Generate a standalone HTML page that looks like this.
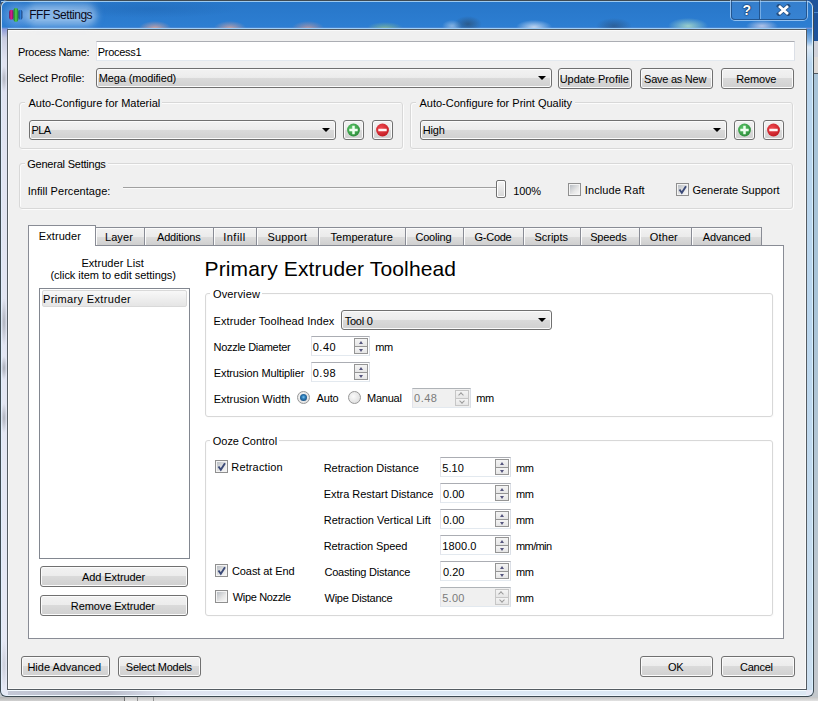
<!DOCTYPE html><html><head><meta charset="utf-8"><style>
html,body{margin:0;padding:0;width:818px;height:701px;overflow:hidden}
body{position:relative;font-family:"Liberation Sans",sans-serif}
body>div,body>svg{position:absolute}
.t{white-space:nowrap;line-height:0;font-family:"Liberation Sans",sans-serif}
</style></head><body>
<div style="left:0px;top:0px;width:818px;height:701px;background:linear-gradient(#a9c4d8 0px,#a9c4d8 300px,#bcc6ce 600px,#c4c8cc 100%)"></div>
<div style="left:814px;top:0px;width:4px;height:41px;background:#1d529a"></div>
<div style="left:814px;top:12px;width:4px;height:1px;background:#4a86c8"></div>
<div style="left:814px;top:41px;width:4px;height:16px;background:#d0d2da"></div>
<div style="left:814px;top:57px;width:4px;height:16px;background:#dcd8d4"></div>
<div style="left:814px;top:73px;width:4px;height:1px;background:#505860"></div>
<div style="left:0px;top:0px;width:10px;height:10px;background:#1d4f8c"></div>
<div style="left:0px;top:697px;width:818px;height:4px;background:linear-gradient(#c4c4c4,#e2e2e2)"></div>
<div style="left:0px;top:697px;width:124px;height:4px;background:linear-gradient(#b4b4b4,#d0d0d0)"></div>
<div style="left:124px;top:697px;width:1px;height:4px;background:#707070"></div>
<div style="left:137px;top:697px;width:1px;height:4px;background:#909090"></div>
<div style="left:153px;top:697px;width:1px;height:4px;background:#909090"></div>
<div style="left:0px;top:0px;width:814px;height:697px;background:linear-gradient(#2776c8 0px,#2d7ed2 27px,#8c9ad8 29px,#c8cce0 38px,#e0e3f0 60px,#e6e9f5 100%);border-radius:7px 7px 6px 6px;box-shadow:inset 0 0 0 1px #3e4a52, inset 0 0 0 2px rgba(225,240,255,0.85)"></div>
<div style="left:1px;top:66px;width:6px;height:26px;background:radial-gradient(closest-side,rgba(120,125,135,0.45),rgba(120,125,135,0))"></div>
<div style="left:1px;top:298px;width:6px;height:48px;background:radial-gradient(closest-side,rgba(120,125,135,0.5),rgba(120,125,135,0))"></div>
<div style="left:1px;top:356px;width:6px;height:24px;background:radial-gradient(closest-side,rgba(120,125,135,0.55),rgba(120,125,135,0))"></div>
<div style="left:1px;top:403px;width:6px;height:30px;background:radial-gradient(closest-side,rgba(120,125,135,0.5),rgba(120,125,135,0))"></div>
<div style="left:1px;top:640px;width:6px;height:50px;background:radial-gradient(closest-side,rgba(120,125,135,0.25),rgba(120,125,135,0))"></div>
<div style="left:807px;top:29px;width:6px;height:661px;background:linear-gradient(#3f86d2 0px,#8ab8e6 12px,#dce8f4 18px,#bad6ee 34px,#bad6ee 45%,#cde0f0 100%);box-shadow:inset -1px 0 0 #d8f0ff"></div>
<div style="left:8px;top:690px;width:798px;height:6px;background:linear-gradient(90deg,#c4c8d6 0px,#b8bcca 100px,#dfe3f0 160px,#dce8f4 360px,#dce8f4 100%);box-shadow:inset 0 1px 0 #f4fbff, inset 0 -1px 0 #f0f8ff"></div>
<div style="left:1px;top:1px;width:812px;height:1px;background:#9ccaf0"></div>
<div style="left:8px;top:28px;width:798px;height:1px;background:#a0d0f8"></div>
<div style="left:7px;top:29px;width:800px;height:661px;background:#f0f0f0;box-shadow:inset 0 0 0 1px #555c62, inset 0 0 0 2px #fafafa"></div>
<div style="left:0px;top:0px;width:34px;height:30px;background:radial-gradient(closest-side,rgba(170,200,245,0.55),rgba(0,0,0,0))"></div>
<svg style="left:8px;top:6px" width="16" height="18" viewBox="0 0 16 18"><defs><linearGradient id="gm" x1="0" x2="1"><stop offset="0" stop-color="#6a1040"/><stop offset="0.45" stop-color="#e0209a"/><stop offset="1" stop-color="#7a1050"/></linearGradient><linearGradient id="gg" x1="0" x2="1"><stop offset="0" stop-color="#1a6a20"/><stop offset="0.5" stop-color="#50d050"/><stop offset="1" stop-color="#1a7a2a"/></linearGradient><linearGradient id="gb" x1="0" x2="1"><stop offset="0" stop-color="#10306a"/><stop offset="0.5" stop-color="#2a80e0"/><stop offset="1" stop-color="#0a2a60"/></linearGradient></defs><rect x="1.2" y="3.8" width="4.2" height="10" rx="2.1" fill="url(#gm)"/><rect x="10.4" y="3.8" width="4" height="10" rx="2" fill="url(#gb)"/><rect x="5.5" y="2" width="4.8" height="14" rx="2.4" fill="url(#gg)"/></svg>
<div style="left:30px;top:9px;width:62px;height:12px;background:rgba(210,230,252,0.55);border-radius:6px;box-shadow:0 0 7px 5px rgba(210,230,252,0.55)"></div>
<div class="t" id="t0" style="left:29.20px;top:15px;font-size:12px;color:#0a0a1a;letter-spacing:-0.482px;">FFF Settings</div>
<div style="left:1px;top:1px;width:812px;height:27px;overflow:hidden"><div style="position:absolute;left:138px;top:20px;width:32px;height:14px;background:radial-gradient(closest-side,rgba(240,170,150,0.75),rgba(0,0,0,0))"></div><div style="position:absolute;left:213px;top:20px;width:32px;height:14px;background:radial-gradient(closest-side,rgba(240,170,150,0.7),rgba(0,0,0,0))"></div><div style="position:absolute;left:291px;top:20px;width:32px;height:14px;background:radial-gradient(closest-side,rgba(240,160,140,0.6),rgba(0,0,0,0))"></div><div style="position:absolute;left:366px;top:21px;width:36px;height:12px;background:radial-gradient(closest-side,rgba(170,210,120,0.55),rgba(0,0,0,0))"></div><div style="position:absolute;left:441px;top:19px;width:20px;height:12px;background:radial-gradient(closest-side,rgba(220,230,240,0.5),rgba(0,0,0,0))"></div><div style="position:absolute;left:453px;top:15px;width:28px;height:16px;background:radial-gradient(closest-side,rgba(40,50,60,0.45),rgba(0,0,0,0))"></div><div style="position:absolute;left:515px;top:19px;width:36px;height:14px;background:radial-gradient(closest-side,rgba(235,240,250,0.75),rgba(0,0,0,0))"></div><div style="position:absolute;left:595px;top:17px;width:36px;height:16px;background:radial-gradient(closest-side,rgba(40,50,70,0.4),rgba(0,0,0,0))"></div><div style="position:absolute;left:667px;top:17px;width:40px;height:16px;background:radial-gradient(closest-side,rgba(200,240,200,0.7),rgba(0,0,0,0))"></div><div style="position:absolute;left:745px;top:19px;width:32px;height:12px;background:radial-gradient(closest-side,rgba(235,225,240,0.7),rgba(0,0,0,0))"></div><div style="position:absolute;left:59px;top:-1px;width:180px;height:18px;background:radial-gradient(closest-side,rgba(20,80,150,0.22),rgba(0,0,0,0))"></div></div>
<div style="left:8px;top:28px;width:798px;height:1px;background:#a0d0f8"></div>
<div style="left:730px;top:0px;width:78px;height:21px;box-sizing:border-box;border:1px solid rgba(180,215,250,0.75);border-top:none;border-radius:0 0 5px 5px"></div>
<div style="left:731px;top:0px;width:76px;height:20px;box-sizing:border-box;border:1px solid rgba(20,50,90,0.55);border-top:none;border-radius:0 0 4px 4px;background:rgba(90,150,220,0.25)"></div>
<div style="left:759px;top:0px;width:1px;height:19px;background:rgba(20,50,90,0.55)"></div>
<div style="left:760px;top:0px;width:1px;height:19px;background:rgba(180,215,250,0.5)"></div>
<div class="t" id="t1" style="left:742.60px;top:10px;font-size:14px;color:#fff;letter-spacing:0.000px;font-weight:bold;text-shadow:0 0 1px #102a50,0 0 1px #102a50,0 0 2px #102a50">?</div>
<svg style="left:776px;top:4px" width="15" height="12" viewBox="0 0 15 12"><path d="M3 2 L12 10 M12 2 L3 10" stroke="#1a3050" stroke-width="4.2" stroke-linecap="square" opacity="0.6"/><path d="M3 2 L12 10 M12 2 L3 10" stroke="#fff" stroke-width="2.8"/></svg>
<div style="left:806px;top:0px;width:12px;height:8px;background:radial-gradient(circle at 0 100%,rgba(0,0,0,0) 7px,#1d529a 8px)"></div>
<div class="t" id="t2" style="left:17.96px;top:52px;font-size:11px;color:#000;letter-spacing:-0.295px;">Process Name:</div>
<div style="left:96px;top:41px;width:699px;height:20px;box-sizing:border-box;background:#fff;border:1px solid;border-color:#abadb3 #dbdfe6 #e3e9ef #e2e3ea"></div>
<div class="t" id="t3" style="left:97.82px;top:52px;font-size:11px;color:#000;letter-spacing:-0.309px;">Process1</div>
<div class="t" id="t4" style="left:17.96px;top:78px;font-size:11px;color:#000;letter-spacing:-0.090px;">Select Profile:</div>
<div style="left:96px;top:68px;width:456px;height:20px;box-sizing:border-box;border:1px solid #707070;border-radius:3px;background:linear-gradient(#f2f2f2 0%,#ececec 47%,#dadada 50%,#d0d0d0 100%);box-shadow:inset 0 0 0 1px #fbfbfb"></div>
<div style="left:538px;top:76px;width:0;height:0;border-left:4px solid transparent;border-right:4px solid transparent;border-top:4px solid #000"></div>
<div class="t" id="t5" style="left:98.82px;top:78px;font-size:11px;color:#000;letter-spacing:-0.144px;">Mega (modified)</div>
<div style="left:558px;top:68px;width:74px;height:21px;box-sizing:border-box;border:1px solid #707070;border-radius:3px;background:linear-gradient(#f2f2f2 0%,#ececec 47%,#dadada 50%,#d0d0d0 100%);box-shadow:inset 0 0 0 1px #fbfbfb"></div>
<div class="t" id="t6" style="left:559.72px;top:79px;font-size:11px;color:#000;letter-spacing:-0.042px;">Update Profile</div>
<div style="left:640px;top:68px;width:73px;height:21px;box-sizing:border-box;border:1px solid #707070;border-radius:3px;background:linear-gradient(#f2f2f2 0%,#ececec 47%,#dadada 50%,#d0d0d0 100%);box-shadow:inset 0 0 0 1px #fbfbfb"></div>
<div class="t" id="t7" style="left:644.10px;top:79px;font-size:11px;color:#000;letter-spacing:-0.258px;">Save as New</div>
<div style="left:721px;top:68px;width:73px;height:21px;box-sizing:border-box;border:1px solid #707070;border-radius:3px;background:linear-gradient(#f2f2f2 0%,#ececec 47%,#dadada 50%,#d0d0d0 100%);box-shadow:inset 0 0 0 1px #fbfbfb"></div>
<div class="t" id="t8" style="left:736.30px;top:79px;font-size:11px;color:#000;letter-spacing:-0.156px;">Remove</div>
<div style="left:20px;top:103px;width:384px;height:47px;box-sizing:border-box;border:1px solid #fcfcfc;border-radius:3px"></div>
<div style="left:19px;top:102px;width:384px;height:47px;box-sizing:border-box;border:1px solid #d8d8d8;border-radius:3px"></div>
<div style="left:25px;top:101px;width:137px;height:4px;background:#f0f0f0"></div>
<div class="t" id="t9" style="left:28.52px;top:103px;font-size:11px;color:#000;letter-spacing:-0.013px;">Auto-Configure for Material</div>
<div style="left:29px;top:120px;width:307px;height:20px;box-sizing:border-box;border:1px solid #707070;border-radius:3px;background:linear-gradient(#f2f2f2 0%,#ececec 47%,#dadada 50%,#d0d0d0 100%);box-shadow:inset 0 0 0 1px #fbfbfb"></div>
<div style="left:322px;top:128px;width:0;height:0;border-left:4px solid transparent;border-right:4px solid transparent;border-top:4px solid #000"></div>
<div class="t" id="t10" style="left:31.42px;top:130px;font-size:11px;color:#000;letter-spacing:-0.500px;">PLA</div>
<div style="left:343px;top:120px;width:21px;height:20px;box-sizing:border-box;border:1px solid #707070;border-radius:3px;background:linear-gradient(#f2f2f2 0%,#ececec 47%,#dadada 50%,#d0d0d0 100%);box-shadow:inset 0 0 0 1px #fbfbfb"></div>
<svg style="left:343px;top:120px" width="21" height="20" viewBox="0 0 21 20"><defs><radialGradient id="pg" cx="0.4" cy="0.35" r="0.7"><stop offset="0" stop-color="#5cc86a"/><stop offset="1" stop-color="#2a8a38"/></radialGradient></defs><circle cx="10.5" cy="10" r="6.4" fill="url(#pg)"/><path d="M10.5 5.8 V14.2 M6.3 10 H14.7" stroke="#effff0" stroke-width="2.5"/></svg>
<div style="left:372px;top:120px;width:21px;height:20px;box-sizing:border-box;border:1px solid #707070;border-radius:3px;background:linear-gradient(#f2f2f2 0%,#ececec 47%,#dadada 50%,#d0d0d0 100%);box-shadow:inset 0 0 0 1px #fbfbfb"></div>
<svg style="left:372px;top:120px" width="21" height="20" viewBox="0 0 21 20"><defs><radialGradient id="mg" cx="0.4" cy="0.35" r="0.7"><stop offset="0" stop-color="#f04a50"/><stop offset="1" stop-color="#c01820"/></radialGradient></defs><circle cx="10.5" cy="10" r="6.4" fill="url(#mg)"/><path d="M6.3 10 H14.7" stroke="#fff4f4" stroke-width="2.5"/></svg>
<div style="left:411px;top:103px;width:383px;height:47px;box-sizing:border-box;border:1px solid #fcfcfc;border-radius:3px"></div>
<div style="left:410px;top:102px;width:383px;height:47px;box-sizing:border-box;border:1px solid #d8d8d8;border-radius:3px"></div>
<div style="left:416px;top:101px;width:159px;height:4px;background:#f0f0f0"></div>
<div class="t" id="t11" style="left:419.52px;top:103px;font-size:11px;color:#000;letter-spacing:-0.008px;">Auto-Configure for Print Quality</div>
<div style="left:420px;top:120px;width:307px;height:20px;box-sizing:border-box;border:1px solid #707070;border-radius:3px;background:linear-gradient(#f2f2f2 0%,#ececec 47%,#dadada 50%,#d0d0d0 100%);box-shadow:inset 0 0 0 1px #fbfbfb"></div>
<div style="left:713px;top:128px;width:0;height:0;border-left:4px solid transparent;border-right:4px solid transparent;border-top:4px solid #000"></div>
<div class="t" id="t12" style="left:422.64px;top:130px;font-size:11px;color:#000;letter-spacing:-0.167px;">High</div>
<div style="left:734px;top:120px;width:21px;height:20px;box-sizing:border-box;border:1px solid #707070;border-radius:3px;background:linear-gradient(#f2f2f2 0%,#ececec 47%,#dadada 50%,#d0d0d0 100%);box-shadow:inset 0 0 0 1px #fbfbfb"></div>
<svg style="left:734px;top:120px" width="21" height="20" viewBox="0 0 21 20"><defs><radialGradient id="pg" cx="0.4" cy="0.35" r="0.7"><stop offset="0" stop-color="#5cc86a"/><stop offset="1" stop-color="#2a8a38"/></radialGradient></defs><circle cx="10.5" cy="10" r="6.4" fill="url(#pg)"/><path d="M10.5 5.8 V14.2 M6.3 10 H14.7" stroke="#effff0" stroke-width="2.5"/></svg>
<div style="left:763px;top:120px;width:21px;height:20px;box-sizing:border-box;border:1px solid #707070;border-radius:3px;background:linear-gradient(#f2f2f2 0%,#ececec 47%,#dadada 50%,#d0d0d0 100%);box-shadow:inset 0 0 0 1px #fbfbfb"></div>
<svg style="left:763px;top:120px" width="21" height="20" viewBox="0 0 21 20"><defs><radialGradient id="mg" cx="0.4" cy="0.35" r="0.7"><stop offset="0" stop-color="#f04a50"/><stop offset="1" stop-color="#c01820"/></radialGradient></defs><circle cx="10.5" cy="10" r="6.4" fill="url(#mg)"/><path d="M6.3 10 H14.7" stroke="#fff4f4" stroke-width="2.5"/></svg>
<div style="left:20px;top:164px;width:774px;height:46px;box-sizing:border-box;border:1px solid #fcfcfc;border-radius:3px"></div>
<div style="left:19px;top:163px;width:774px;height:46px;box-sizing:border-box;border:1px solid #d8d8d8;border-radius:3px"></div>
<div style="left:25px;top:162px;width:83px;height:4px;background:#f0f0f0"></div>
<div class="t" id="t13" style="left:27.20px;top:164px;font-size:11px;color:#000;letter-spacing:-0.217px;">General Settings</div>
<div class="t" id="t14" style="left:27.68px;top:191px;font-size:11px;color:#000;letter-spacing:0.044px;">Infill Percentage:</div>
<div style="left:123px;top:187px;width:374px;height:1px;background:#a0a0a0"></div>
<div style="left:123px;top:188px;width:374px;height:1px;background:#fafafa"></div>
<div style="left:496px;top:180px;width:10px;height:18px;box-sizing:border-box;border:1px solid #707070;border-radius:2px;background:linear-gradient(#f6f6f6,#d6d6d6);box-shadow:inset 0 0 0 1px #fff"></div>
<div class="t" id="t15" style="left:513.20px;top:191px;font-size:11px;color:#000;letter-spacing:-0.113px;">100%</div>
<div style="left:568px;top:183px;width:13px;height:13px;box-sizing:border-box;border:1px solid #8f8f8f;background:#f4f4f4"></div>
<div style="left:570px;top:185px;width:9px;height:9px;background:linear-gradient(135deg,#b9bec4 0%,#e6e6e6 60%,#f6f6f6 100%)"></div>
<div class="t" id="t16" style="left:584.82px;top:190px;font-size:11px;color:#000;letter-spacing:0.098px;">Include Raft</div>
<div style="left:676px;top:183px;width:13px;height:13px;box-sizing:border-box;border:1px solid #8f8f8f;background:#f4f4f4"></div>
<div style="left:678px;top:185px;width:9px;height:9px;background:linear-gradient(135deg,#b9bec4 0%,#e6e6e6 60%,#f6f6f6 100%)"></div>
<svg style="left:676px;top:183px" width="13" height="13" viewBox="0 0 13 13"><path d="M3.5 6.5 L5.8 9.8 L10 3.2" fill="none" stroke="#3b4a78" stroke-width="1.9"/></svg>
<div class="t" id="t17" style="left:692.44px;top:190px;font-size:11px;color:#000;letter-spacing:-0.017px;">Generate Support</div>
<div style="left:28px;top:245px;width:756px;height:394px;box-sizing:border-box;background:#fff;border:1px solid #898c95"></div>
<div style="left:95px;top:227px;width:50px;height:19px;box-sizing:border-box;border:1px solid #898c95;background:linear-gradient(#f2f2f2 0%,#ebebeb 50%,#dddddd 50%,#cfcfcf 100%);box-shadow:inset 1px 1px 0 #fcfcfc"></div>
<div class="t" id="t18" style="left:104.96px;top:237px;font-size:11px;color:#000;letter-spacing:0.090px;">Layer</div>
<div style="left:144px;top:227px;width:70px;height:19px;box-sizing:border-box;border:1px solid #898c95;background:linear-gradient(#f2f2f2 0%,#ebebeb 50%,#dddddd 50%,#cfcfcf 100%);box-shadow:inset 1px 1px 0 #fcfcfc"></div>
<div class="t" id="t19" style="left:157.00px;top:237px;font-size:11px;color:#000;letter-spacing:-0.180px;">Additions</div>
<div style="left:213px;top:227px;width:44px;height:19px;box-sizing:border-box;border:1px solid #898c95;background:linear-gradient(#f2f2f2 0%,#ebebeb 50%,#dddddd 50%,#cfcfcf 100%);box-shadow:inset 1px 1px 0 #fcfcfc"></div>
<div class="t" id="t20" style="left:223.20px;top:237px;font-size:11px;color:#000;letter-spacing:0.500px;">Infill</div>
<div style="left:256px;top:227px;width:63px;height:19px;box-sizing:border-box;border:1px solid #898c95;background:linear-gradient(#f2f2f2 0%,#ebebeb 50%,#dddddd 50%,#cfcfcf 100%);box-shadow:inset 1px 1px 0 #fcfcfc"></div>
<div class="t" id="t21" style="left:267.44px;top:237px;font-size:11px;color:#000;letter-spacing:0.140px;">Support</div>
<div style="left:318px;top:227px;width:88px;height:19px;box-sizing:border-box;border:1px solid #898c95;background:linear-gradient(#f2f2f2 0%,#ebebeb 50%,#dddddd 50%,#cfcfcf 100%);box-shadow:inset 1px 1px 0 #fcfcfc"></div>
<div class="t" id="t22" style="left:330.48px;top:237px;font-size:11px;color:#000;letter-spacing:0.056px;">Temperature</div>
<div style="left:405px;top:227px;width:59px;height:19px;box-sizing:border-box;border:1px solid #898c95;background:linear-gradient(#f2f2f2 0%,#ebebeb 50%,#dddddd 50%,#cfcfcf 100%);box-shadow:inset 1px 1px 0 #fcfcfc"></div>
<div class="t" id="t23" style="left:415.44px;top:237px;font-size:11px;color:#000;letter-spacing:-0.200px;">Cooling</div>
<div style="left:463px;top:227px;width:61px;height:19px;box-sizing:border-box;border:1px solid #898c95;background:linear-gradient(#f2f2f2 0%,#ebebeb 50%,#dddddd 50%,#cfcfcf 100%);box-shadow:inset 1px 1px 0 #fcfcfc"></div>
<div class="t" id="t24" style="left:474.58px;top:237px;font-size:11px;color:#000;letter-spacing:-0.280px;">G-Code</div>
<div style="left:523px;top:227px;width:58px;height:19px;box-sizing:border-box;border:1px solid #898c95;background:linear-gradient(#f2f2f2 0%,#ebebeb 50%,#dddddd 50%,#cfcfcf 100%);box-shadow:inset 1px 1px 0 #fcfcfc"></div>
<div class="t" id="t25" style="left:534.58px;top:237px;font-size:11px;color:#000;letter-spacing:-0.050px;">Scripts</div>
<div style="left:580px;top:227px;width:60px;height:19px;box-sizing:border-box;border:1px solid #898c95;background:linear-gradient(#f2f2f2 0%,#ebebeb 50%,#dddddd 50%,#cfcfcf 100%);box-shadow:inset 1px 1px 0 #fcfcfc"></div>
<div class="t" id="t26" style="left:590.20px;top:237px;font-size:11px;color:#000;letter-spacing:-0.156px;">Speeds</div>
<div style="left:639px;top:227px;width:53px;height:19px;box-sizing:border-box;border:1px solid #898c95;background:linear-gradient(#f2f2f2 0%,#ebebeb 50%,#dddddd 50%,#cfcfcf 100%);box-shadow:inset 1px 1px 0 #fcfcfc"></div>
<div class="t" id="t27" style="left:649.82px;top:237px;font-size:11px;color:#000;letter-spacing:0.115px;">Other</div>
<div style="left:691px;top:227px;width:71px;height:19px;box-sizing:border-box;border:1px solid #898c95;background:linear-gradient(#f2f2f2 0%,#ebebeb 50%,#dddddd 50%,#cfcfcf 100%);box-shadow:inset 1px 1px 0 #fcfcfc"></div>
<div class="t" id="t28" style="left:702.86px;top:237px;font-size:11px;color:#000;letter-spacing:-0.151px;">Advanced</div>
<div style="left:28px;top:225px;width:68px;height:21px;box-sizing:border-box;border:1px solid #898c95;border-bottom:none;background:#fff"></div>
<div class="t" id="t29" style="left:38.82px;top:236px;font-size:11px;color:#000;letter-spacing:0.066px;">Extruder</div>
<div class="t" id="t30" style="left:81.44px;top:263px;font-size:11px;color:#000;letter-spacing:0.047px;">Extruder List</div>
<div class="t" id="t31" style="left:50.48px;top:275px;font-size:11px;color:#000;letter-spacing:-0.036px;">(click item to edit settings)</div>
<div style="left:39px;top:288px;width:151px;height:271px;box-sizing:border-box;background:#fff;border:1px solid #828790"></div>
<div style="left:42px;top:290px;width:145px;height:17px;box-sizing:border-box;border:1px solid #d9d9d9;border-radius:2px;background:linear-gradient(#f8f8f8,#e5e5e5)"></div>
<div class="t" id="t32" style="left:43.06px;top:299px;font-size:11px;color:#000;letter-spacing:0.348px;">Primary Extruder</div>
<div style="left:40px;top:566px;width:148px;height:21px;box-sizing:border-box;border:1px solid #707070;border-radius:3px;background:linear-gradient(#f2f2f2 0%,#ececec 47%,#dadada 50%,#d0d0d0 100%);box-shadow:inset 0 0 0 1px #fbfbfb"></div>
<div class="t" id="t33" style="left:82.00px;top:577px;font-size:11px;color:#000;letter-spacing:-0.084px;">Add Extruder</div>
<div style="left:40px;top:595px;width:148px;height:21px;box-sizing:border-box;border:1px solid #707070;border-radius:3px;background:linear-gradient(#f2f2f2 0%,#ececec 47%,#dadada 50%,#d0d0d0 100%);box-shadow:inset 0 0 0 1px #fbfbfb"></div>
<div class="t" id="t34" style="left:70.82px;top:606px;font-size:11px;color:#000;letter-spacing:-0.100px;">Remove Extruder</div>
<div class="t" id="t35" style="left:204.50px;top:269px;font-size:21px;color:#000;letter-spacing:0.138px;">Primary Extruder Toolhead</div>
<div style="left:205px;top:293px;width:568px;height:124px;background:#fff;border-radius:3px"></div>
<div style="left:206px;top:294px;width:568px;height:124px;box-sizing:border-box;border:1px solid #fcfcfc;border-radius:3px"></div>
<div style="left:205px;top:293px;width:568px;height:124px;box-sizing:border-box;border:1px solid #d8d8d8;border-radius:3px"></div>
<div style="left:210px;top:292px;width:52px;height:4px;background:#fff"></div>
<div class="t" id="t36" style="left:212.96px;top:294px;font-size:11px;color:#000;letter-spacing:0.154px;">Overview</div>
<div class="t" id="t37" style="left:213.58px;top:321px;font-size:11px;color:#000;letter-spacing:0.079px;">Extruder Toolhead Index</div>
<div style="left:341px;top:310px;width:211px;height:20px;box-sizing:border-box;border:1px solid #707070;border-radius:3px;background:linear-gradient(#f2f2f2 0%,#ececec 47%,#dadada 50%,#d0d0d0 100%);box-shadow:inset 0 0 0 1px #fbfbfb"></div>
<div style="left:538px;top:318px;width:0;height:0;border-left:4px solid transparent;border-right:4px solid transparent;border-top:4px solid #000"></div>
<div class="t" id="t38" style="left:344.72px;top:321px;font-size:11px;color:#000;letter-spacing:-0.248px;">Tool 0</div>
<div class="t" id="t39" style="left:213.58px;top:347px;font-size:11px;color:#000;letter-spacing:-0.304px;">Nozzle Diameter</div>
<div style="left:311px;top:336px;width:59px;height:20px;box-sizing:border-box;background:#fff;border:1px solid;border-color:#abadb3 #dbdfe6 #e3e9ef #e2e3ea"></div>
<div style="left:354px;top:338px;width:14px;height:8px;box-sizing:border-box;border:1px solid #959595;border-bottom:none;background:linear-gradient(#f4f4f4,#e6e6e6)"></div>
<div style="left:354px;top:346px;width:14px;height:8px;box-sizing:border-box;border:1px solid #959595;background:linear-gradient(#f4f4f4,#e6e6e6)"></div>
<div style="left:358.5px;top:340.5px;width:0;height:0;border-left:2.5px solid transparent;border-right:2.5px solid transparent;border-bottom:3px solid #55557e"></div>
<div style="left:358.5px;top:348.5px;width:0;height:0;border-left:2.5px solid transparent;border-right:2.5px solid transparent;border-top:3px solid #55557e"></div>
<div class="t" id="t40" style="left:312.76px;top:347px;font-size:11px;color:#000;letter-spacing:0.500px;">0.40</div>
<div class="t" id="t41" style="left:375.32px;top:347px;font-size:11px;color:#000;letter-spacing:-0.500px;">mm</div>
<div class="t" id="t42" style="left:213.82px;top:373px;font-size:11px;color:#000;letter-spacing:-0.126px;">Extrusion Multiplier</div>
<div style="left:311px;top:362px;width:59px;height:20px;box-sizing:border-box;background:#fff;border:1px solid;border-color:#abadb3 #dbdfe6 #e3e9ef #e2e3ea"></div>
<div style="left:354px;top:364px;width:14px;height:8px;box-sizing:border-box;border:1px solid #959595;border-bottom:none;background:linear-gradient(#f4f4f4,#e6e6e6)"></div>
<div style="left:354px;top:372px;width:14px;height:8px;box-sizing:border-box;border:1px solid #959595;background:linear-gradient(#f4f4f4,#e6e6e6)"></div>
<div style="left:358.5px;top:366.5px;width:0;height:0;border-left:2.5px solid transparent;border-right:2.5px solid transparent;border-bottom:3px solid #55557e"></div>
<div style="left:358.5px;top:374.5px;width:0;height:0;border-left:2.5px solid transparent;border-right:2.5px solid transparent;border-top:3px solid #55557e"></div>
<div class="t" id="t43" style="left:312.76px;top:373px;font-size:11px;color:#000;letter-spacing:0.500px;">0.98</div>
<div class="t" id="t44" style="left:213.82px;top:399px;font-size:11px;color:#000;letter-spacing:-0.039px;">Extrusion Width</div>
<div style="left:296.5px;top:391.2px;width:13px;height:13px;box-sizing:border-box;border-radius:50%;border:1px solid #979797;background:radial-gradient(circle at 40% 40%,#fafafa,#d8d8d8)"></div>
<div style="left:299.5px;top:394.2px;width:7px;height:7px;border-radius:50%;background:radial-gradient(circle at 50% 45%,#7cc4ee 0%,#2c7cb8 35%,#123e6a 90%)"></div>
<div class="t" id="t45" style="left:316.56px;top:398px;font-size:11px;color:#000;letter-spacing:-0.167px;">Auto</div>
<div style="left:348.4px;top:391.2px;width:13px;height:13px;box-sizing:border-box;border-radius:50%;border:1px solid #979797;background:radial-gradient(circle at 40% 40%,#fafafa,#d8d8d8)"></div>
<div class="t" id="t46" style="left:366.96px;top:398px;font-size:11px;color:#000;letter-spacing:-0.232px;">Manual</div>
<div style="left:412px;top:388px;width:59px;height:20px;box-sizing:border-box;background:#f0f0f0;border:1px solid;border-color:#afb3b7 #dbdfe6 #e3e9ef #e2e3ea"></div>
<div style="left:455px;top:390px;width:14px;height:8px;box-sizing:border-box;border:1px solid #c6c6c6;border-bottom:none;background:linear-gradient(#f4f4f4,#e6e6e6)"></div>
<div style="left:455px;top:398px;width:14px;height:8px;box-sizing:border-box;border:1px solid #c6c6c6;background:linear-gradient(#f4f4f4,#e6e6e6)"></div>
<div style="left:459px;top:393px;width:3px;height:3px;border-left:1px solid #9a9a9a;border-top:1px solid #9a9a9a;transform:rotate(45deg);transform-origin:center"></div>
<div style="left:460px;top:399px;width:3px;height:3px;border-right:1px solid #9a9a9a;border-bottom:1px solid #9a9a9a;transform:rotate(45deg)"></div>
<div class="t" id="t47" style="left:414.10px;top:398px;font-size:11px;color:#7a7a7a;letter-spacing:0.487px;">0.48</div>
<div class="t" id="t48" style="left:476.32px;top:398px;font-size:11px;color:#000;letter-spacing:-0.500px;">mm</div>
<div style="left:205px;top:440px;width:568px;height:176px;background:#fff;border-radius:3px"></div>
<div style="left:206px;top:441px;width:568px;height:176px;box-sizing:border-box;border:1px solid #fcfcfc;border-radius:3px"></div>
<div style="left:205px;top:440px;width:568px;height:176px;box-sizing:border-box;border:1px solid #d8d8d8;border-radius:3px"></div>
<div style="left:210px;top:439px;width:69px;height:4px;background:#fff"></div>
<div class="t" id="t49" style="left:212.82px;top:441px;font-size:11px;color:#000;letter-spacing:-0.045px;">Ooze Control</div>
<div style="left:215px;top:460px;width:13px;height:13px;box-sizing:border-box;border:1px solid #8f8f8f;background:#f4f4f4"></div>
<div style="left:217px;top:462px;width:9px;height:9px;background:linear-gradient(135deg,#b9bec4 0%,#e6e6e6 60%,#f6f6f6 100%)"></div>
<svg style="left:215px;top:460px" width="13" height="13" viewBox="0 0 13 13"><path d="M3.5 6.5 L5.8 9.8 L10 3.2" fill="none" stroke="#3b4a78" stroke-width="1.9"/></svg>
<div class="t" id="t50" style="left:231.30px;top:467px;font-size:11px;color:#000;letter-spacing:0.136px;">Retraction</div>
<div class="t" id="t51" style="left:323.68px;top:468px;font-size:11px;color:#000;letter-spacing:-0.049px;">Retraction Distance</div>
<div style="left:440px;top:457px;width:71px;height:20px;box-sizing:border-box;background:#fff;border:1px solid;border-color:#abadb3 #dbdfe6 #e3e9ef #e2e3ea"></div>
<div style="left:495px;top:459px;width:14px;height:8px;box-sizing:border-box;border:1px solid #959595;border-bottom:none;background:linear-gradient(#f4f4f4,#e6e6e6)"></div>
<div style="left:495px;top:467px;width:14px;height:8px;box-sizing:border-box;border:1px solid #959595;background:linear-gradient(#f4f4f4,#e6e6e6)"></div>
<div style="left:499.5px;top:461.5px;width:0;height:0;border-left:2.5px solid transparent;border-right:2.5px solid transparent;border-bottom:3px solid #55557e"></div>
<div style="left:499.5px;top:469.5px;width:0;height:0;border-left:2.5px solid transparent;border-right:2.5px solid transparent;border-top:3px solid #55557e"></div>
<div class="t" id="t52" style="left:442.20px;top:468px;font-size:11px;color:#000;letter-spacing:0.080px;">5.10</div>
<div class="t" id="t53" style="left:516.10px;top:468px;font-size:11px;color:#000;letter-spacing:-0.500px;">mm</div>
<div class="t" id="t54" style="left:323.68px;top:494px;font-size:11px;color:#000;letter-spacing:-0.012px;">Extra Restart Distance</div>
<div style="left:440px;top:483px;width:71px;height:20px;box-sizing:border-box;background:#fff;border:1px solid;border-color:#abadb3 #dbdfe6 #e3e9ef #e2e3ea"></div>
<div style="left:495px;top:485px;width:14px;height:8px;box-sizing:border-box;border:1px solid #959595;border-bottom:none;background:linear-gradient(#f4f4f4,#e6e6e6)"></div>
<div style="left:495px;top:493px;width:14px;height:8px;box-sizing:border-box;border:1px solid #959595;background:linear-gradient(#f4f4f4,#e6e6e6)"></div>
<div style="left:499.5px;top:487.5px;width:0;height:0;border-left:2.5px solid transparent;border-right:2.5px solid transparent;border-bottom:3px solid #55557e"></div>
<div style="left:499.5px;top:495.5px;width:0;height:0;border-left:2.5px solid transparent;border-right:2.5px solid transparent;border-top:3px solid #55557e"></div>
<div class="t" id="t55" style="left:443.00px;top:494px;font-size:11px;color:#000;letter-spacing:0.000px;">0.00</div>
<div class="t" id="t56" style="left:516.10px;top:494px;font-size:11px;color:#000;letter-spacing:-0.500px;">mm</div>
<div class="t" id="t57" style="left:323.68px;top:520px;font-size:11px;color:#000;letter-spacing:0.010px;">Retraction Vertical Lift</div>
<div style="left:440px;top:509px;width:71px;height:20px;box-sizing:border-box;background:#fff;border:1px solid;border-color:#abadb3 #dbdfe6 #e3e9ef #e2e3ea"></div>
<div style="left:495px;top:511px;width:14px;height:8px;box-sizing:border-box;border:1px solid #959595;border-bottom:none;background:linear-gradient(#f4f4f4,#e6e6e6)"></div>
<div style="left:495px;top:519px;width:14px;height:8px;box-sizing:border-box;border:1px solid #959595;background:linear-gradient(#f4f4f4,#e6e6e6)"></div>
<div style="left:499.5px;top:513.5px;width:0;height:0;border-left:2.5px solid transparent;border-right:2.5px solid transparent;border-bottom:3px solid #55557e"></div>
<div style="left:499.5px;top:521.5px;width:0;height:0;border-left:2.5px solid transparent;border-right:2.5px solid transparent;border-top:3px solid #55557e"></div>
<div class="t" id="t58" style="left:443.00px;top:520px;font-size:11px;color:#000;letter-spacing:0.000px;">0.00</div>
<div class="t" id="t59" style="left:516.10px;top:520px;font-size:11px;color:#000;letter-spacing:-0.500px;">mm</div>
<div class="t" id="t60" style="left:323.68px;top:546px;font-size:11px;color:#000;letter-spacing:-0.084px;">Retraction Speed</div>
<div style="left:440px;top:535px;width:71px;height:20px;box-sizing:border-box;background:#fff;border:1px solid;border-color:#abadb3 #dbdfe6 #e3e9ef #e2e3ea"></div>
<div style="left:495px;top:537px;width:14px;height:8px;box-sizing:border-box;border:1px solid #959595;border-bottom:none;background:linear-gradient(#f4f4f4,#e6e6e6)"></div>
<div style="left:495px;top:545px;width:14px;height:8px;box-sizing:border-box;border:1px solid #959595;background:linear-gradient(#f4f4f4,#e6e6e6)"></div>
<div style="left:499.5px;top:539.5px;width:0;height:0;border-left:2.5px solid transparent;border-right:2.5px solid transparent;border-bottom:3px solid #55557e"></div>
<div style="left:499.5px;top:547.5px;width:0;height:0;border-left:2.5px solid transparent;border-right:2.5px solid transparent;border-top:3px solid #55557e"></div>
<div class="t" id="t61" style="left:442.20px;top:546px;font-size:11px;color:#000;letter-spacing:0.120px;">1800.0</div>
<div class="t" id="t62" style="left:516.10px;top:546px;font-size:11px;color:#000;letter-spacing:-0.632px;">mm/min</div>
<div class="t" id="t63" style="left:324.48px;top:572px;font-size:11px;color:#000;letter-spacing:-0.209px;">Coasting Distance</div>
<div style="left:440px;top:561px;width:71px;height:20px;box-sizing:border-box;background:#fff;border:1px solid;border-color:#abadb3 #dbdfe6 #e3e9ef #e2e3ea"></div>
<div style="left:495px;top:563px;width:14px;height:8px;box-sizing:border-box;border:1px solid #959595;border-bottom:none;background:linear-gradient(#f4f4f4,#e6e6e6)"></div>
<div style="left:495px;top:571px;width:14px;height:8px;box-sizing:border-box;border:1px solid #959595;background:linear-gradient(#f4f4f4,#e6e6e6)"></div>
<div style="left:499.5px;top:565.5px;width:0;height:0;border-left:2.5px solid transparent;border-right:2.5px solid transparent;border-bottom:3px solid #55557e"></div>
<div style="left:499.5px;top:573.5px;width:0;height:0;border-left:2.5px solid transparent;border-right:2.5px solid transparent;border-top:3px solid #55557e"></div>
<div class="t" id="t64" style="left:443.00px;top:572px;font-size:11px;color:#000;letter-spacing:0.000px;">0.20</div>
<div class="t" id="t65" style="left:516.10px;top:572px;font-size:11px;color:#000;letter-spacing:-0.500px;">mm</div>
<div class="t" id="t66" style="left:324.48px;top:598px;font-size:11px;color:#000;letter-spacing:-0.223px;">Wipe Distance</div>
<div style="left:440px;top:587px;width:71px;height:20px;box-sizing:border-box;background:#f0f0f0;border:1px solid;border-color:#afb3b7 #dbdfe6 #e3e9ef #e2e3ea"></div>
<div style="left:495px;top:589px;width:14px;height:8px;box-sizing:border-box;border:1px solid #c6c6c6;border-bottom:none;background:linear-gradient(#f4f4f4,#e6e6e6)"></div>
<div style="left:495px;top:597px;width:14px;height:8px;box-sizing:border-box;border:1px solid #c6c6c6;background:linear-gradient(#f4f4f4,#e6e6e6)"></div>
<div style="left:499px;top:592px;width:3px;height:3px;border-left:1px solid #9a9a9a;border-top:1px solid #9a9a9a;transform:rotate(45deg);transform-origin:center"></div>
<div style="left:500px;top:598px;width:3px;height:3px;border-right:1px solid #9a9a9a;border-bottom:1px solid #9a9a9a;transform:rotate(45deg)"></div>
<div class="t" id="t67" style="left:442.20px;top:598px;font-size:11px;color:#7a7a7a;letter-spacing:0.267px;">5.00</div>
<div class="t" id="t68" style="left:516.10px;top:598px;font-size:11px;color:#000;letter-spacing:-0.500px;">mm</div>
<div style="left:215px;top:564px;width:13px;height:13px;box-sizing:border-box;border:1px solid #8f8f8f;background:#f4f4f4"></div>
<div style="left:217px;top:566px;width:9px;height:9px;background:linear-gradient(135deg,#b9bec4 0%,#e6e6e6 60%,#f6f6f6 100%)"></div>
<svg style="left:215px;top:564px" width="13" height="13" viewBox="0 0 13 13"><path d="M3.5 6.5 L5.8 9.8 L10 3.2" fill="none" stroke="#3b4a78" stroke-width="1.9"/></svg>
<div class="t" id="t69" style="left:231.96px;top:571px;font-size:11px;color:#000;letter-spacing:-0.084px;">Coast at End</div>
<div style="left:215px;top:590px;width:13px;height:13px;box-sizing:border-box;border:1px solid #8f8f8f;background:#f4f4f4"></div>
<div style="left:217px;top:592px;width:9px;height:9px;background:linear-gradient(135deg,#b9bec4 0%,#e6e6e6 60%,#f6f6f6 100%)"></div>
<div class="t" id="t70" style="left:232.76px;top:597px;font-size:11px;color:#000;letter-spacing:-0.344px;">Wipe Nozzle</div>
<div style="left:21px;top:656px;width:89px;height:21px;box-sizing:border-box;border:1px solid #707070;border-radius:3px;background:linear-gradient(#f2f2f2 0%,#ececec 47%,#dadada 50%,#d0d0d0 100%);box-shadow:inset 0 0 0 1px #fbfbfb"></div>
<div class="t" id="t71" style="left:27.44px;top:667px;font-size:11px;color:#000;letter-spacing:-0.022px;">Hide Advanced</div>
<div style="left:118px;top:656px;width:83px;height:21px;box-sizing:border-box;border:1px solid #707070;border-radius:3px;background:linear-gradient(#f2f2f2 0%,#ececec 47%,#dadada 50%,#d0d0d0 100%);box-shadow:inset 0 0 0 1px #fbfbfb"></div>
<div class="t" id="t72" style="left:125.82px;top:667px;font-size:11px;color:#000;letter-spacing:-0.237px;">Select Models</div>
<div style="left:640px;top:656px;width:73px;height:21px;box-sizing:border-box;border:1px solid #707070;border-radius:3px;background:linear-gradient(#f2f2f2 0%,#ececec 47%,#dadada 50%,#d0d0d0 100%);box-shadow:inset 0 0 0 1px #fbfbfb"></div>
<div class="t" id="t73" style="left:668.10px;top:667px;font-size:11px;color:#000;letter-spacing:-0.500px;">OK</div>
<div style="left:721px;top:656px;width:74px;height:21px;box-sizing:border-box;border:1px solid #707070;border-radius:3px;background:linear-gradient(#f2f2f2 0%,#ececec 47%,#dadada 50%,#d0d0d0 100%);box-shadow:inset 0 0 0 1px #fbfbfb"></div>
<div class="t" id="t74" style="left:740.10px;top:667px;font-size:11px;color:#000;letter-spacing:-0.268px;">Cancel</div>
</body></html>
